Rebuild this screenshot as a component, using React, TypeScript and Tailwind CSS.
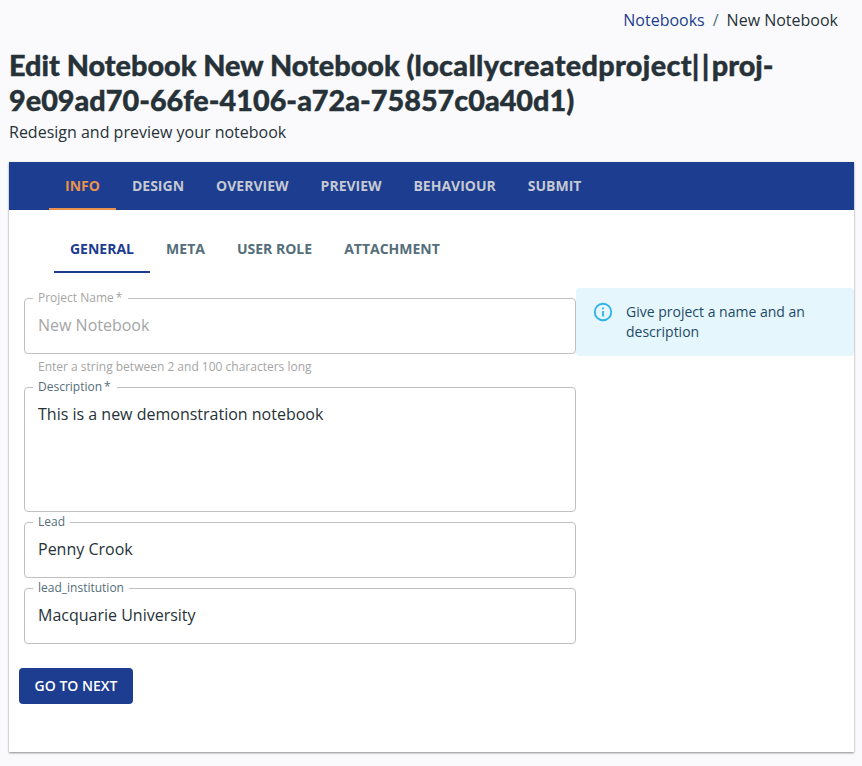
import React from "react";

const TABS: { label: string; w: string }[] = [
  { label: "INFO", w: "w-[67px]" },
  { label: "DESIGN", w: "w-[84px]" },
  { label: "OVERVIEW", w: "w-[104.6px]" },
  { label: "PREVIEW", w: "w-[93px]" },
  { label: "BEHAVIOUR", w: "w-[114px]" },
  { label: "SUBMIT", w: "w-[86px]" },
];

const SUB_TABS: { label: string; w: string }[] = [
  { label: "GENERAL", w: "w-[96px]" },
  { label: "META", w: "w-[71px]" },
  { label: "USER ROLE", w: "w-[107px]" },
  { label: "ATTACHMENT", w: "w-[128px]" },
];

function Field({ label, value, height, required = false, disabled = false }: { label: string; value: string; height: string; required?: boolean; disabled?: boolean }) {
  return (
    <fieldset className={`-mt-[5px] ${height} w-[552px] rounded border border-[#c0c0c0] pl-2 ${disabled ? "text-[#a5a5a5]" : "text-[#263238]"}`}>
      <legend className={`h-[11px] px-[5px] text-[12px] leading-[10px] whitespace-nowrap ${disabled ? "text-[#a5a5a5]" : "text-[#546e7a]"}`}>
        {label}
        {required && <span className="ml-[2px] mr-px">*</span>}
      </legend>
      <div className="pl-[5px] pt-[10px] text-[16px] leading-[23px]">{value}</div>
    </fieldset>
  );
}

export default function App() {
  return (
    <div className="h-[766px] w-[862px] overflow-hidden bg-[#fafafc] pl-[9px] pr-2 font-['Open_Sans',sans-serif] text-[#263238]">
      <nav className="flex h-[40px] items-center justify-end gap-2 pr-4 text-[16px]">
        <span className="text-[#1c3d90]">Notebooks</span>
        <span className="text-[#546e7a]">/</span>
        <span>New Notebook</span>
      </nav>
      <h1 className="mt-2 font-['Lato',sans-serif] text-[28.8px] leading-[35px] font-black whitespace-nowrap [-webkit-text-stroke:0.4px_#263238]">
        Edit Notebook New Notebook (<span className="tracking-[0.33px]">locallycreatedproject</span><span className="tracking-[2.3px]">||</span>proj-<br />9e09ad70-66fe-4106-a72a-75857c0a40d1)
      </h1>
      <p className="text-[16px] leading-[28px]">Redesign and preview your notebook</p>

      <main className="mt-4 h-[590px] bg-white shadow-[0_1px_2px_rgba(0,0,0,0.45)]">
        <div className="flex h-[48px] bg-[#1c3d90] pl-[40px] text-[14px] font-bold">
          {TABS.map((t, i) => (
            <div key={t.label} className={`flex h-[48px] ${t.w} items-center justify-center ${i === 0 ? "border-b-2 border-[#e8924d] text-[#e8924d]" : "pb-[2px] text-[#c5c9d3]"}`}>{t.label}</div>
          ))}
        </div>
        <div className="mt-[15px] flex h-[48px] pl-[45px] text-[14px] font-bold">
          {SUB_TABS.map((t, i) => (
            <div key={t.label} className={`flex h-[48px] ${t.w} items-center justify-center ${i === 0 ? "border-b-2 border-[#1c3d90] text-[#1c3d90]" : "pb-[2px] text-[#546e7a]"}`}>{t.label}</div>
          ))}
        </div>
        <div className="mt-[15px] flex h-[365px] items-start">
          <div className="w-[567px] pl-[15px] pt-[10px]">
            <Field label="Project Name" value="New Notebook" height="h-[61px]" required disabled />
            <p className="mt-[3px] h-[30px] pl-[14px] text-[12px] leading-[20px] text-[#a5a5a5]">Enter a string between 2 and 100 characters long</p>
            <Field label="Description" value="This is a new demonstration notebook" height="h-[130px]" required />
            <div className="h-[10px]" />
            <Field label="Lead" value="Penny Crook" height="h-[61px]" />
            <div className="h-[10px]" />
            <Field label="lead_institution" value="Macquarie University" height="h-[61px]" />
          </div>
          <aside className="flex h-[68px] flex-1 rounded bg-[#e5f6fd] pl-4 pt-[14px] text-[14px] leading-5 text-[#1e4a66]">
            <svg className="-mt-px mr-3 h-[22px] w-[22px] fill-[#2fb1ea]" viewBox="0 0 24 24">
              <path d="M11 7h2v2h-2zm0 4h2v6h-2zm1-9a10 10 0 1 0 0 20 10 10 0 0 0 0-20zm0 18a8 8 0 1 1 0-16 8 8 0 0 1 0 16z" />
            </svg>
            <p>Give project a name and an<br />description</p>
          </aside>
        </div>
        <button className="ml-[10px] mt-[15px] flex h-[36px] w-[114px] items-center justify-center rounded bg-[#1c3d90] pb-[2px] text-[14px] font-semibold text-white">GO TO NEXT</button>
      </main>
    </div>
  );
}
